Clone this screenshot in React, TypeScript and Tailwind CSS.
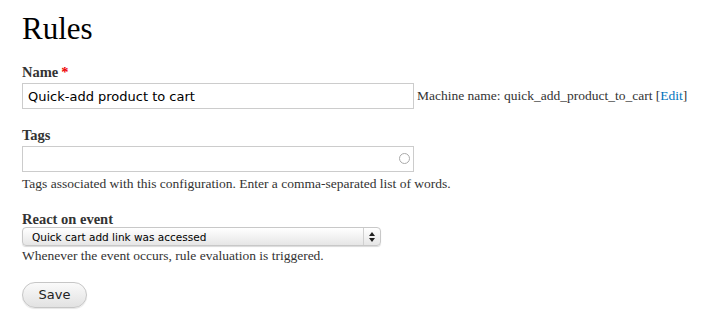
export default function App() {
  return (
    <div className="min-h-[326px] w-[718px] bg-white px-[22px] pt-[11px] text-[#333] font-['Liberation_Serif',serif]">
      <h1 className="text-[31px] leading-[36px] font-normal text-black">Rules</h1>

      <form className="mt-[17px] flex flex-col">
        {/* Name */}
        <div className="flex flex-col">
          <label className="text-[14.5px] leading-[16px] font-bold text-[#333]">
            Name<span className="ml-[3px] text-[#e00]">*</span>
          </label>
          <div className="mt-[3px] flex items-center gap-[3px]">
            <input
              type="text"
              defaultValue="Quick-add product to cart"
              className="h-[26px] w-[392px] border border-[#ccc] px-[5px] text-[13px] text-black outline-none font-['DejaVu_Sans',sans-serif]"
            />
            <span className="text-[13.5px] text-[#333]">
              Machine name: quick_add_product_to_cart [<a className="text-[#0074bd]">Edit</a>]
            </span>
          </div>
        </div>

        {/* Tags */}
        <div className="mt-[18px] flex flex-col">
          <label className="text-[14.5px] leading-[16px] font-bold text-[#333]">Tags</label>
          <div className="relative mt-[3px] w-[392px]">
            <input
              type="text"
              className="h-[26px] w-full border border-[#ccc] px-[5px] text-[13px] outline-none font-['DejaVu_Sans',sans-serif]"
            />
            <span className="absolute right-[4px] top-[7px] h-[11px] w-[11px] rounded-full border-[1.5px] border-[#aaa]" />
          </div>
          <p className="mt-[4px] text-[13.5px] leading-[16px] text-[#333]">
            Tags associated with this configuration. Enter a comma-separated list of words.
          </p>
        </div>

        {/* Event */}
        <div className="mt-[19px] flex flex-col">
          <label className="text-[14.5px] leading-[16px] font-bold text-[#333]">React on event</label>
          <div className="mt-0 flex h-[19px] w-[359px] items-center rounded-[4px] border border-[#c8c8c8] bg-gradient-to-b from-white to-[#e6e6e6] shadow-[0_1px_1px_rgba(0,0,0,0.15)]">
            <span className="flex-1 pl-[9px] text-[10.5px] leading-[16px] text-black font-['DejaVu_Sans',sans-serif]">
              Quick cart add link was accessed
            </span>
            <span className="flex h-full w-[17px] flex-col items-center justify-center border-l border-[#d0d0d0]">
              <svg width="6" height="10" viewBox="0 0 6 10">
                <path d="M3 0 L6 4 L0 4 Z" fill="#222" />
                <path d="M0 6 L6 6 L3 10 Z" fill="#222" />
              </svg>
            </span>
          </div>
          <p className="mt-[2px] text-[13.5px] leading-[16px] text-[#333]">
            Whenever the event occurs, rule evaluation is triggered.
          </p>
        </div>

        <div className="mt-[18px]">
          <button
            type="button"
            className="h-[26px] w-[65px] rounded-full border border-[#c6c6c6] bg-gradient-to-b from-[#fafafa] to-[#e2e2e2] text-[13px] text-[#222] font-['DejaVu_Sans',sans-serif] shadow-[0_1px_1px_rgba(0,0,0,0.1)]"
          >
            Save
          </button>
        </div>
      </form>
    </div>
  );
}
